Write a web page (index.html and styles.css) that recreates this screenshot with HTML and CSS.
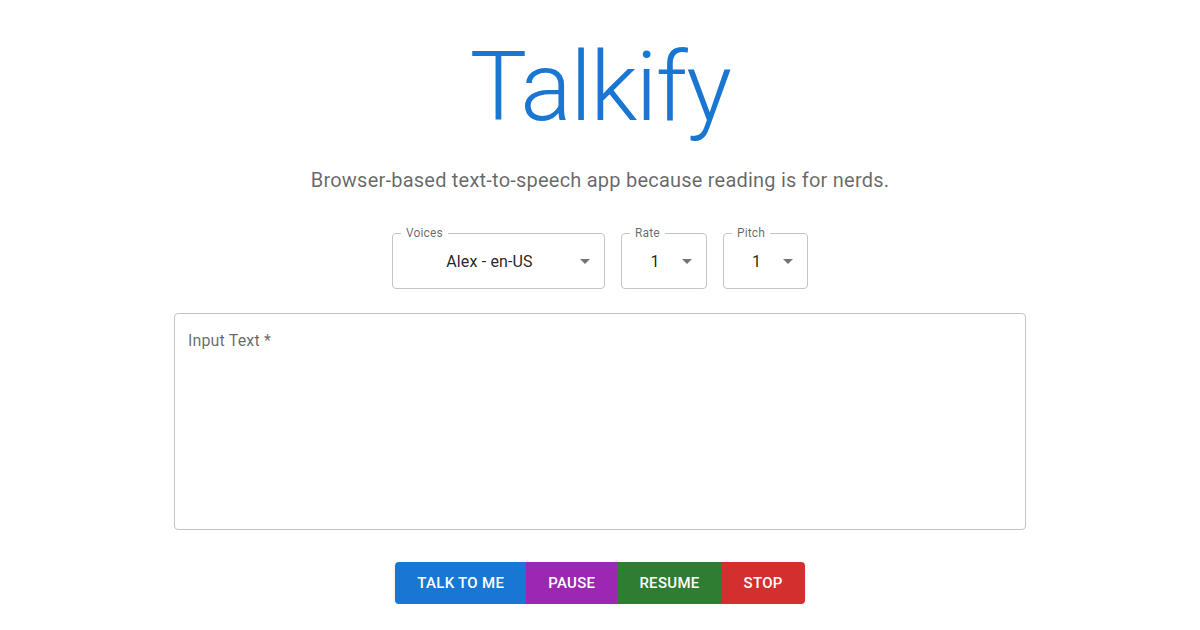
FILE: index.html
```html
<!DOCTYPE html>
<html lang="en">
<head>
  <meta charset="UTF-8" />
  <meta name="viewport" content="width=device-width, initial-scale=1.0"/>
  <title>Talkify</title>
  <link rel="stylesheet" href="styles.css">
</head>
<body>
  <main class="app">
    <h1 class="title">Talkify</h1>
    <h6 class="subtitle">Browser-based text-to-speech app because reading is for nerds.</h6>

    <div class="controls">
      <div class="select select-voices">
        <span class="select-label">Voices</span>
        <span class="select-value">Alex - en-US</span>
        <svg class="select-icon" viewBox="0 0 24 24"><path d="M7 10l5 5 5-5z"/></svg>
      </div>
      <div class="select select-rate">
        <span class="select-label">Rate</span>
        <span class="select-value">1</span>
        <svg class="select-icon" viewBox="0 0 24 24"><path d="M7 10l5 5 5-5z"/></svg>
      </div>
      <div class="select select-pitch">
        <span class="select-label">Pitch</span>
        <span class="select-value">1</span>
        <svg class="select-icon" viewBox="0 0 24 24"><path d="M7 10l5 5 5-5z"/></svg>
      </div>
    </div>

    <div class="text-field">
      <span class="text-label">Input Text *</span>
    </div>

    <div class="button-group">
      <button class="btn btn-talk">Talk to me</button>
      <button class="btn btn-pause">Pause</button>
      <button class="btn btn-resume">Resume</button>
      <button class="btn btn-stop">Stop</button>
    </div>
  </main>
</body>
</html>
```

FILE: styles.css
```css
* {
  box-sizing: border-box;
}

html, body {
  margin: 0;
  background: #fff;
  font-family: Roboto, 'Liberation Sans', sans-serif;
  color: rgba(0, 0, 0, 0.87);
}

.app {
  display: flex;
  flex-direction: column;
  align-items: center;
}

.title {
  margin: 31px 0 0;
  font-size: 96px;
  font-weight: 300;
  line-height: 112px;
  letter-spacing: -1.5px;
  color: #1976d2;
}

.subtitle {
  margin: 21px 0 0;
  font-size: 20px;
  font-weight: 400;
  line-height: 32px;
  letter-spacing: 0.22px;
  color: rgba(0, 0, 0, 0.6);
}

.controls {
  display: flex;
  gap: 16px;
  margin-top: 37px;
}

.select {
  position: relative;
  display: flex;
  align-items: center;
  justify-content: center;
  height: 56px;
  padding: 0 32px 0 14px;
  border: 1px solid #c4c4c4;
  border-radius: 4px;
  font-size: 16px;
}

.select-voices { width: 213px; }
.select-rate { width: 86px; }
.select-pitch { width: 85px; }

.select-label {
  position: absolute;
  left: 8px;
  top: -9px;
  padding: 0 5px;
  background: #fff;
  font-size: 12px;
  line-height: 16px;
  letter-spacing: 0.15px;
  color: rgba(0, 0, 0, 0.6);
}

.select-value {
  letter-spacing: 0.15px;
}

.select-icon {
  position: absolute;
  right: 7px;
  top: 15px;
  width: 24px;
  height: 24px;
  fill: rgba(0, 0, 0, 0.54);
}

.text-field {
  width: 852px;
  height: 217px;
  margin-top: 24px;
  padding: 15px 13px;
  border: 1px solid #c4c4c4;
  border-radius: 4px;
}

.text-label {
  font-size: 16px;
  line-height: 23px;
  letter-spacing: 0.15px;
  color: rgba(0, 0, 0, 0.6);
}

.button-group {
  display: flex;
  margin-top: 32px;
  border-radius: 4px;
  overflow: hidden;
  box-shadow: 0 1px 3px rgba(0, 0, 0, 0.12);
}

.btn {
  border: none;
  padding: 8px 22px;
  font-family: inherit;
  font-size: 15px;
  font-weight: 500;
  line-height: 26px;
  letter-spacing: 0.3px;
  text-transform: uppercase;
  color: #fff;
  cursor: pointer;
}

.btn-talk { background: #1976d2; }
.btn-pause { background: #9c27b0; }
.btn-resume { background: #2e7d32; }
.btn-stop { background: #d32f2f; }
```
